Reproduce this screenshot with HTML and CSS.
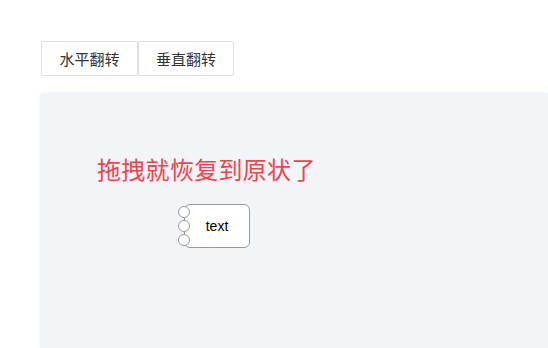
FILE: index.html
```html
<!DOCTYPE html>
<html lang="zh">
<head>
  <meta charset="UTF-8" />
  <title>翻转</title>
  <link rel="stylesheet" href="styles.css">
</head>
<body>
  <div class="toolbar">
    <button class="btn">水平翻转</button>
    <button class="btn">垂直翻转</button>
  </div>

  <div class="canvas">
    <div class="tip">拖拽就恢复到原状了</div>
    <div class="node">
      <div class="ports">
        <span class="port"></span>
        <span class="port"></span>
        <span class="port"></span>
      </div>
      <div class="node-body">text</div>
    </div>
  </div>
</body>
</html>
```

FILE: styles.css
```css
* {
  margin: 0; padding: 0; box-sizing: border-box;
}

body {
  padding: 41px 0 0 40px;
  height: 100vh;
  font-family: "Liberation Sans", "Noto Sans CJK SC", sans-serif;
  background: #fff;
  overflow: hidden;
  display: flex;
  flex-direction: column;
}

.toolbar {
  display: flex;
  padding-left: 1px;
}

.btn {
  height: 35px;
  padding: 0 17px;
  border: 1px solid #dcdfe6;
  border-radius: 2px;
  background: #fff;
  color: #333;
  font-size: 15px;
  font-family: "Noto Sans CJK SC", sans-serif;
  cursor: pointer;
}

.btn:first-child {
  width: 97px;
}

.canvas {
  position: relative;
  flex: 1;
  margin-top: 17px;
  background: #f1f5f8;
  border-radius: 4px 0 0 0;
  box-shadow: 0 0 4px rgba(0, 0, 0, 0.06);
}

.tip {
  position: absolute;
  left: 57px;
  top: 58px;
  font-size: 24px;
  letter-spacing: 0.3px;
  font-family: "Noto Sans CJK SC", sans-serif;
  color: #f4424b;
}

.node {
  position: absolute;
  left: 138px;
  top: 111px;
  display: flex;
  align-items: center;
}

.ports {
  display: flex;
  flex-direction: column;
  gap: 2px;
  margin-right: -6px;
  z-index: 1;
}

.port {
  width: 12px;
  height: 12px;
  border: 1px solid #999;
  border-radius: 50%;
  background: #fff;
}

.node-body {
  width: 66px;
  height: 44px;
  display: flex;
  align-items: center;
  justify-content: center;
  border: 1px solid #999;
  border-radius: 6px;
  background: #fff;
  font-size: 14px;
  color: #000;
}
```
